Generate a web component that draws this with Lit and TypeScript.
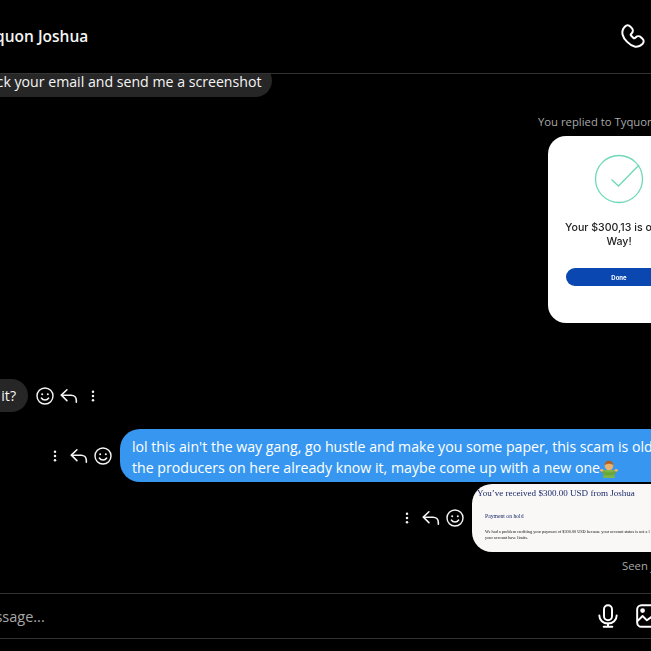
import { LitElement, html, css, svg } from "lit";
import { customElement } from "lit/decorators.js";

const smile = html`<svg class="ico" viewBox="0 0 24 24" fill="none" stroke="currentColor" stroke-width="1.7">
  <circle cx="12" cy="12" r="9.6"></circle>
  <circle cx="8.6" cy="10" r="1.2" fill="currentColor" stroke="none"></circle>
  <circle cx="15.4" cy="10" r="1.2" fill="currentColor" stroke="none"></circle>
  <path d="M7.6 14.4c1 1.6 2.6 2.4 4.4 2.4s3.4-.8 4.4-2.4" stroke-linecap="round"></path>
</svg>`;

const reply = html`<svg class="ico" viewBox="0 0 24 24" fill="none" stroke="currentColor" stroke-width="1.9" stroke-linecap="round" stroke-linejoin="round">
  <path d="M9.5 4.5 2.8 11l6.7 6.5"></path>
  <path d="M3 11h11.5c3.6 0 6.3 2.7 6.3 6.3v2.2"></path>
</svg>`;

const dots = html`<svg class="ico" viewBox="0 0 24 24" fill="currentColor">
  <circle cx="12" cy="7" r="1.5"></circle>
  <circle cx="12" cy="12" r="1.5"></circle>
  <circle cx="12" cy="17" r="1.5"></circle>
</svg>`;

const shrug = svg`<g>
  <path d="M4.500 11h11l1 9h-13z" fill="#7ab648"></path>
  <path d="M1 12.500 5 17h10l4-4.500-2-1.500-3 2.500H6L3 11z" fill="#6aa63a"></path>
  <ellipse cx="2" cy="11.500" rx="2" ry="1.500" fill="#e9b36f"></ellipse>
  <ellipse cx="18" cy="11.500" rx="2" ry="1.500" fill="#e9b36f"></ellipse>
  <circle cx="10" cy="6.500" r="4.800" fill="#e9b36f"></circle>
  <path d="M5 6.500C5 2.800 7.300.8 10 .8s5 2 5 5.700c-1-1.700-2.900-2.300-5-2.300s-4 .6-5 2.300z" fill="#b0601e"></path>
</g>`;

@customElement("app-root")
export class AppRoot extends LitElement {
  static styles = css`
    :host {
      display: block;
      width: 651px;
      height: 651px;
      overflow: hidden;
      background: #000;
      color: #f5f5f5;
      font-family: "Open Sans", "Noto Sans", sans-serif;
    }
    .chat {
      display: flex;
      flex-direction: column;
      width: 651px;
      height: 651px;
    }
    .top {
      flex: none;
      height: 73px;
      margin-bottom: 1px;
      box-sizing: border-box;
      box-shadow: 0 1px 0 #333;
      display: flex;
      align-items: center;
      justify-content: space-between;
    }
    .name {
      font-size: 15.500px;
      font-weight: 600;
      margin: 0 0 2px -22px;
      white-space: nowrap;
    }
    .phone {
      width: 32px;
      height: 32px;
      margin: 0 2px 1px 0;
      color: #fff;
    }
    .thread {
      flex: none;
      width: 750px;
      height: 519px;
      margin-left: -60px;
      overflow: hidden;
      display: flex;
      flex-direction: column;
    }
    .row {
      display: flex;
      align-items: center;
      flex: none;
    }
    .row.out {
      justify-content: flex-end;
    }
    .bubble {
      font-size: 14.150px;
      line-height: 21px;
      padding: 7px 12px 5px;
      border-radius: 17px;
      white-space: nowrap;
      box-sizing: border-box;
    }
    .bubble.in {
      background: #262626;
    }
    .first {
      margin-top: -10px;
    }
    .first .bubble {
      margin-left: -25px;
      padding-right: 11px;
    }
    .note {
      font-size: 11.300px;
      line-height: 16px;
      color: #a8a8a8;
      white-space: nowrap;
    }
    .replied {
      margin-top: 17px;
      padding-left: 598px;
    }
    .success {
      margin-top: 6px;
      width: 142px;
      height: 187px;
      background: #fff;
      border-radius: 18px;
      color: #222;
      display: flex;
      flex-direction: column;
      align-items: center;
      font-family: Inter, "Liberation Sans", sans-serif;
      filter: blur(0.3px);
    }
    .check {
      width: 50px;
      height: 50px;
      margin-top: 18px;
    }
    .success p {
      margin: 17px 0 0;
      font-size: 10.600px;
      line-height: 14px;
      font-weight: 500;
      text-align: center;
    }
    .done {
      margin-top: 19px;
      width: 106px;
      height: 18px;
      border-radius: 9px;
      background: #0a47b0;
      color: #fff;
      font-size: 6px;
      font-weight: 700;
      display: flex;
      align-items: center;
      justify-content: center;
    }
    .ask {
      margin-top: 56px;
    }
    .ask .bubble {
      height: 33px;
      width: 121px;
      margin-left: -33px;
      margin-right: 7px;
      padding-top: 6px;
      padding-bottom: 6px;
      text-align: right;
    }
    .tools {
      display: flex;
      align-items: center;
      gap: 4px;
      color: #f5f5f5;
      margin-right: 7px;
    }
    .ask .tools {
      margin-right: 0;
    }
    .ico {
      display: block;
      width: 20px;
      height: 20px;
    }
    .mine {
      margin-top: 17px;
    }
    .blue {
      width: 570px;
      height: 53px;
      background: #3797f0;
      color: #fff;
      border-radius: 20px;
      overflow: hidden;
    }
    .shrug {
      display: inline-block;
      width: 18px;
      height: 18px;
      vertical-align: -5px;
    }
    .attach {
      margin-top: 2px;
    }
    .receipt {
      width: 218px;
      height: 68px;
      background: #f9f8f6;
      border-radius: 20px;
      color: #1c2a6b;
      font-family: "Liberation Serif", serif;
      overflow: hidden;
      white-space: nowrap;
      padding: 3px 0 0 5px;
      box-sizing: border-box;
      filter: blur(0.25px);
    }
    .receipt h4 {
      margin: 0;
      font-size: 9.050px;
      line-height: 12px;
      font-weight: 400;
    }
    .receipt .hold {
      margin: 13px 0 0 8px;
      font-size: 5.700px;
      line-height: 8px;
    }
    .receipt .small {
      margin: 9px 0 0 8px;
      font-size: 4.250px;
      line-height: 6px;
      color: #111;
    }
    .seen {
      margin-top: 6px;
      padding-left: 682px;
    }
    .bar {
      flex: none;
      height: 46px;
      box-sizing: border-box;
      border-top: 1px solid #333;
      border-bottom: 1px solid #333;
      display: flex;
      align-items: center;
      justify-content: space-between;
    }
    .hint {
      margin-left: -74px;
      font-size: 14.500px;
      color: #a8a8a8;
      white-space: nowrap;
    }
    .actions {
      display: flex;
      align-items: center;
      gap: 14px;
      color: #fff;
      margin-right: -10px;
    }
    .actions svg {
      display: block;
      width: 26px;
      height: 26px;
    }
  `;

  render() {
    return html`
      <div class="chat">
        <header class="top">
          <span class="name">Tyquon Joshua</span>
          <svg class="phone" viewBox="0 0 24 24" fill="none" stroke="currentColor" stroke-width="1.500" stroke-linejoin="round">
            <path d="M7.978 4a2.553 2.553 0 0 0-1.926.877C4.233 6.700 3.699 8.751 4.153 10.814c.44 1.995 1.778 3.893 3.456 5.572 1.680 1.679 3.577 3.018 5.570 3.459 2.062.456 4.115-.073 5.940-1.885a2.556 2.556 0 0 0 .001-3.861l-1.210-1.210a2.689 2.689 0 0 0-3.802 0l-.617.618a.806.806 0 0 1-1.140 0l-1.854-1.855a.807.807 0 0 1 0-1.140l.618-.620a2.692 2.692 0 0 0 0-3.803l-1.210-1.211A2.555 2.555 0 0 0 7.978 4z"></path>
          </svg>
        </header>

        <section class="thread">
          <div class="row first">
            <div class="bubble in">Please check your email and send me a screenshot</div>
          </div>

          <div class="note replied">You replied to Tyquon Joshua</div>
          <div class="row out">
            <div class="success">
              <svg class="check" viewBox="0 0 50 50" fill="none" stroke="#6ed9b9" stroke-width="1.300">
                <circle cx="25" cy="25" r="23.500"></circle>
                <path d="M17.500 25.500 24.500 32 45 11"></path>
              </svg>
              <p>Your $300,13 is on its<br />Way!</p>
              <div class="done">Done</div>
            </div>
          </div>

          <div class="row ask">
            <div class="bubble in">Did you get it?</div>
            <div class="tools">${smile}${reply}${dots}</div>
          </div>

          <div class="row out mine">
            <div class="tools">${dots}${reply}${smile}</div>
            <div class="bubble blue">
              lol this ain't the way gang, go hustle and make you some paper, this scam is old<br />
              the producers on here already know it, maybe come up with a new one<svg class="shrug" viewBox="0 0 20 20">${shrug}</svg>
            </div>
          </div>

          <div class="row out attach">
            <div class="tools">${dots}${reply}${smile}</div>
            <div class="receipt">
              <h4>You’ve received $300.00 USD from Joshua</h4>
              <div class="hold">Payment on hold</div>
              <div class="small">We had a problem crediting your payment of $300.00 USD because your account status is not a l<br />your account have limits.</div>
            </div>
          </div>

          <div class="note seen">Seen just now</div>
        </section>

        <footer class="bar">
          <span class="hint">Type a message...</span>
          <div class="actions">
            <svg viewBox="0 0 24 24" fill="none" stroke="currentColor" stroke-width="1.800" stroke-linecap="round">
              <rect x="8.300" y="2" width="7.400" height="14" rx="3.700"></rect>
              <path d="M4 11.500c0 4.400 3.500 7.500 8 7.500s8-3.100 8-7.500"></path>
              <path d="M12 19v3M8 22h8"></path>
            </svg>
            <svg viewBox="0 0 24 24" fill="none" stroke="currentColor" stroke-width="1.800" stroke-linejoin="round">
              <rect x="2" y="2" width="20" height="20" rx="4"></rect>
              <circle cx="7" cy="7" r="1.300" fill="currentColor"></circle>
              <path d="M2 17l5-5 4 4 4-3 7 6"></path>
            </svg>
          </div>
        </footer>
      </div>
    `;
  }
}
